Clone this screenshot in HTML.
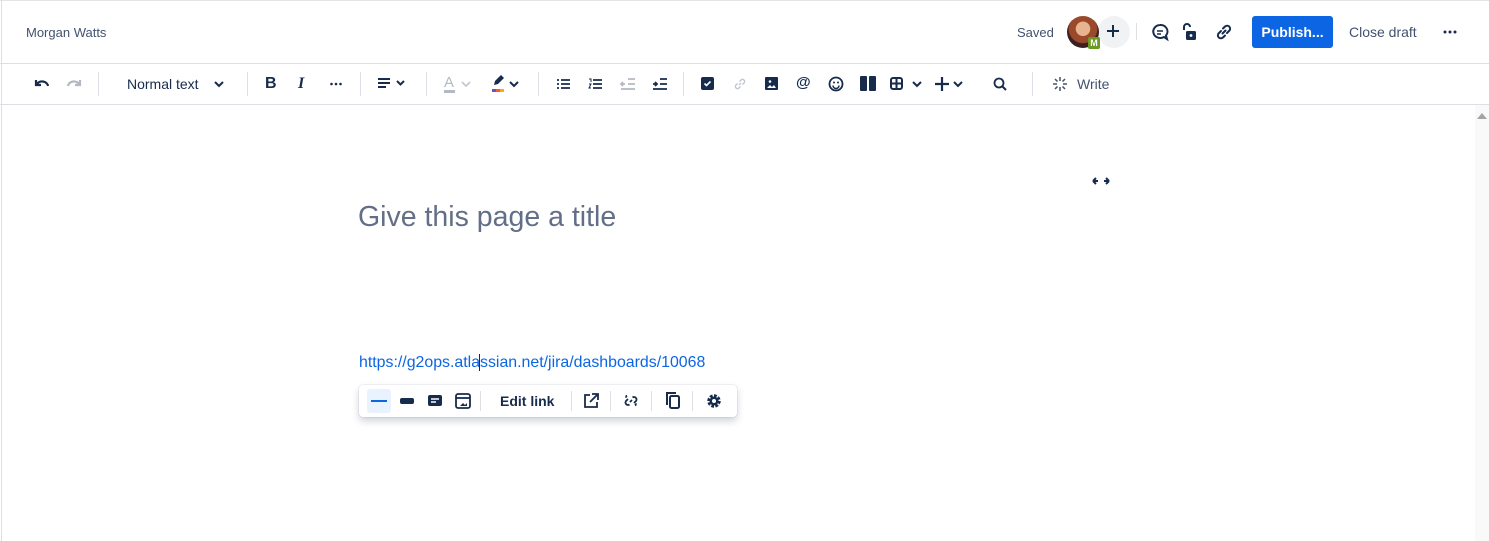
<!DOCTYPE html>
<html><head><meta charset="utf-8"><style>
*{margin:0;padding:0;box-sizing:border-box}
body{width:1489px;height:541px;overflow:hidden;background:#fff;font-family:"Liberation Sans",sans-serif;position:relative;color:#172b4d}
.a{position:absolute}
.sep{position:absolute;width:1px;background:#dcdfe4}
svg{position:absolute;overflow:visible}
.t{font-size:14px;color:#42526e;position:absolute;white-space:nowrap}
</style></head><body>
<div class="a" style="left:0;top:0;width:1489px;height:1px;background:#e2e4e8"></div>
<div class="a" style="left:1px;top:0;width:1px;height:541px;background:#dcdfe4"></div>
<div class="a" style="left:0;top:63px;width:1489px;height:1px;background:#dcdfe4"></div>
<div class="a" style="left:0;top:104px;width:1489px;height:1px;background:#dcdfe4"></div>
<div class="a" style="left:1475px;top:105px;width:14px;height:436px;background:#f9f9f9"></div>
<svg style="left:1477px;top:112px" width="10" height="8"><path d="M0 7L5 1L10 7Z" fill="#a3a3a3"/></svg>

<div class="t" style="left:26px;top:25px;font-size:13px">Morgan Watts</div>
<div class="t" style="left:1017px;top:25px;font-size:13px">Saved</div>
<div class="a" style="left:1098px;top:16px;width:32px;height:32px;border-radius:50%;background:#f1f2f4"></div>
<svg style="left:1106px;top:24px" width="14" height="14"><path d="M7 1V13M1 7H13" stroke="#172b4d" stroke-width="2"/></svg>
<div class="a" style="left:1067px;top:16px;width:32px;height:32px;border-radius:50%;background:radial-gradient(circle at 50% 40%,#e8b48f 0 28%,#9a4a2a 30% 55%,#3a2020 60%)"></div>
<div class="a" style="left:1088px;top:37px;width:12px;height:12px;background:#6a9a23;border-radius:2px;color:#fff;font-size:9px;font-weight:bold;text-align:center;line-height:12px">M</div>
<div class="sep" style="left:1136px;top:23px;height:17px"></div>
<svg style="left:1151px;top:23px" width="18" height="18"><path d="M9 2a7 6.5 0 1 0 4 12l3 2-1-3.5A7 6.5 0 0 0 9 2z" fill="none" stroke="#172b4d" stroke-width="2"/><path d="M6 8h6M6 11h4" stroke="#172b4d" stroke-width="1.6"/></svg>
<svg style="left:1181px;top:22px" width="18" height="20"><path d="M3 8V5a3 3 0 0 1 6 0" fill="none" stroke="#172b4d" stroke-width="2"/><rect x="5" y="9" width="10" height="9" rx="1.5" fill="#172b4d"/><circle cx="10" cy="13.5" r="1.4" fill="#fff"/></svg>
<svg style="left:1214px;top:22px" width="20" height="20"><path d="M8.5 11.5l3-3M7 9l-2.5 2.5a3 3 0 0 0 4.2 4.2L11 13.5M13 11l2.5-2.5a3 3 0 0 0-4.2-4.2L9 6.5" fill="none" stroke="#172b4d" stroke-width="2" stroke-linecap="round"/></svg>
<div class="a" style="left:1252px;top:16px;width:81px;height:32px;background:#0c66e4;border-radius:3px;color:#fff;font-weight:bold;font-size:14px;text-align:center;line-height:32px">Publish...</div>
<div class="t" style="left:1349px;top:24px;font-size:14px">Close draft</div>
<svg style="left:1443px;top:30px" width="14" height="4"><circle cx="2" cy="2" r="1.5" fill="#172b4d"/><circle cx="7" cy="2" r="1.5" fill="#172b4d"/><circle cx="12" cy="2" r="1.5" fill="#172b4d"/></svg>

<!-- toolbar -->
<svg style="left:33px;top:77px" width="18" height="14"><path d="M3 3v5h5M3.5 7.5A6 5 0 0 1 15 9" fill="none" stroke="#172b4d" stroke-width="2.2"/></svg>
<svg style="left:65px;top:77px" width="18" height="14"><path d="M15 3v5h-5M14.5 7.5A6 5 0 0 0 3 9" fill="none" stroke="#b3b9c4" stroke-width="2.2"/></svg>
<div class="sep" style="left:98px;top:72px;height:24px"></div>
<div class="t" style="left:127px;top:76px;color:#172b4d">Normal text</div>
<svg style="left:214px;top:80px" width="10" height="8"><path d="M1 2l4 4 4-4" fill="none" stroke="#172b4d" stroke-width="2"/></svg>
<div class="sep" style="left:247px;top:72px;height:24px"></div>
<div class="t" style="left:265px;top:75px;color:#172b4d;font-weight:bold;font-size:16px">B</div>
<div class="t" style="left:298px;top:75px;color:#172b4d;font-style:italic;font-size:16px;font-family:'Liberation Serif',serif;font-weight:bold">I</div>
<svg style="left:330px;top:82px" width="12" height="4"><circle cx="1.5" cy="2" r="1.3" fill="#172b4d"/><circle cx="6" cy="2" r="1.3" fill="#172b4d"/><circle cx="10.5" cy="2" r="1.3" fill="#172b4d"/></svg>
<div class="sep" style="left:360px;top:72px;height:24px"></div>
<svg style="left:378px;top:78px" width="28" height="12"><path d="M0 1h12M0 5h12M0 9h8" stroke="#172b4d" stroke-width="2"/><path d="M19 3l3.5 3.5L26 3" fill="none" stroke="#172b4d" stroke-width="2"/></svg>
<div class="sep" style="left:426px;top:72px;height:24px"></div>
<div class="t" style="left:444px;top:74px;color:#b3b9c4;font-size:15px">A</div>
<div class="a" style="left:444px;top:90px;width:11px;height:3px;background:#b3b9c4"></div>
<svg style="left:461px;top:80px" width="10" height="8"><path d="M1 2l4 4 4-4" fill="none" stroke="#c1c7d0" stroke-width="1.6"/></svg>
<svg style="left:491px;top:74px" width="14" height="14"><path d="M3 11l1-4 6-6 3 3-6 6z" fill="#172b4d"/></svg>
<div class="a" style="left:492px;top:89px;width:12px;height:3px;background:linear-gradient(90deg,#6554c0 33%,#ff5630 33% 66%,#ffab00 66%)"></div>
<svg style="left:509px;top:80px" width="10" height="8"><path d="M1 2l4 4 4-4" fill="none" stroke="#172b4d" stroke-width="2"/></svg>
<div class="sep" style="left:538px;top:72px;height:24px"></div>
<svg style="left:557px;top:79px" width="13" height="11"><path d="M0 1h2M0 5h2M0 9h2M4 1h9M4 5h9M4 9h9" stroke="#172b4d" stroke-width="1.8"/></svg>
<svg style="left:589px;top:78px" width="13" height="12"><path d="M4 2h9M4 6h9M4 10h9" stroke="#172b4d" stroke-width="1.8"/><path d="M0 1h2v3M0 6h2l-2 4h2" fill="none" stroke="#172b4d" stroke-width="1"/></svg>
<svg style="left:621px;top:78px" width="14" height="12"><path d="M7 1h7M7 6h7M0 11h14M0 6h4M2 4l-2 2 2 2" fill="none" stroke="#b3b9c4" stroke-width="1.8"/></svg>
<svg style="left:653px;top:78px" width="14" height="12"><path d="M7 1h7M7 6h7M0 11h14M0 6h4M2 4l2 2-2 2" fill="none" stroke="#172b4d" stroke-width="1.8"/></svg>
<div class="sep" style="left:683px;top:72px;height:24px"></div>
<div class="a" style="left:701px;top:77px;width:13px;height:13px;background:#172b4d;border-radius:2px"></div>
<svg style="left:701px;top:77px" width="13" height="13"><path d="M3.5 6.5l2 2 4-4" fill="none" stroke="#fff" stroke-width="1.6"/></svg>
<svg style="left:733px;top:77px" width="14" height="14"><path d="M6 8l2-2M4.5 6.5L3 8a2 2 0 0 0 3 3l1.5-1.5M9.5 7.5L11 6a2 2 0 0 0-3-3L6.5 4.5" fill="none" stroke="#c1c7d0" stroke-width="1.4"/></svg>
<div class="a" style="left:765px;top:77px;width:13px;height:13px;background:#172b4d;border-radius:1px"></div>
<svg style="left:765px;top:77px" width="13" height="13"><path d="M2 11l3-3 2 2 2-2 2 3z" fill="#fff"/><circle cx="5" cy="4.5" r="1.3" fill="#fff"/></svg>
<div class="t" style="left:796px;top:74px;color:#172b4d;font-size:15px;font-weight:bold">@</div>
<svg style="left:828px;top:76px" width="16" height="16"><circle cx="8" cy="8" r="6.5" fill="none" stroke="#172b4d" stroke-width="1.8"/><circle cx="6" cy="6.5" r="1" fill="#172b4d"/><circle cx="10" cy="6.5" r="1" fill="#172b4d"/><path d="M5 9.5a3 3 0 0 0 6 0" fill="none" stroke="#172b4d" stroke-width="1.5"/></svg>
<div class="a" style="left:860px;top:76px;width:7px;height:15px;background:#172b4d;border-radius:1px"></div>
<div class="a" style="left:869px;top:76px;width:7px;height:15px;background:#172b4d;border-radius:1px"></div>
<svg style="left:890px;top:77px" width="13" height="13"><rect x="1" y="1" width="11" height="11" rx="2" fill="none" stroke="#172b4d" stroke-width="2"/><path d="M6.5 1v11M1 6.5h11" stroke="#172b4d" stroke-width="2"/></svg>
<svg style="left:912px;top:80px" width="10" height="8"><path d="M1 2l4 4 4-4" fill="none" stroke="#172b4d" stroke-width="2"/></svg>
<svg style="left:935px;top:77px" width="14" height="14"><path d="M7 0V14M0 7H14" stroke="#172b4d" stroke-width="2.2"/></svg>
<svg style="left:953px;top:80px" width="10" height="8"><path d="M1 2l4 4 4-4" fill="none" stroke="#172b4d" stroke-width="2"/></svg>
<svg style="left:993px;top:77px" width="14" height="14"><circle cx="6" cy="6" r="4.5" fill="none" stroke="#172b4d" stroke-width="1.8"/><path d="M9.5 9.5l3.5 3.5" stroke="#172b4d" stroke-width="2"/></svg>
<div class="sep" style="left:1032px;top:72px;height:24px"></div>
<svg style="left:1052px;top:76px" width="16" height="16"><path d="M8 1v4M8 11v4M1 8h4M11 8h4M3 3l2.5 2.5M10.5 10.5L13 13M13 3l-2.5 2.5M5.5 10.5L3 13" stroke="#42526e" stroke-width="1.5"/></svg>
<div class="t" style="left:1077px;top:76px;color:#42526e">Write</div>

<!-- content -->
<svg style="left:1092px;top:177px" width="18" height="8"><path d="M1 4h5M1 4l3-3M1 4l3 3M17 4h-5M17 4l-3-3M17 4l-3 3" fill="none" stroke="#172b4d" stroke-width="2"/></svg>
<div class="a" style="left:358px;top:201px;font-size:28.5px;color:#626f86;white-space:nowrap">Give this page a title</div>
<div class="a" style="left:359px;top:354px;font-size:15.9px;color:#0c66e4;white-space:nowrap">https://g2ops.atla<span style="border-left:1.5px solid #172b4d;margin-left:-1px"></span>ssian.net/jira/dashboards/10068</div>

<div class="a" style="left:359px;top:385px;width:378px;height:32px;background:#fff;border-radius:4px;box-shadow:0 4px 8px rgba(9,30,66,.2),0 0 1px rgba(9,30,66,.3)"></div>
<div class="a" style="left:367px;top:389px;width:24px;height:24px;background:#e9f2ff;border-radius:3px"></div>
<div class="a" style="left:371px;top:400px;width:16px;height:2px;background:#0c66e4"></div>
<div class="a" style="left:400px;top:398px;width:14px;height:6px;background:#172b4d;border-radius:2px"></div>
<svg style="left:427px;top:394px" width="16" height="14"><rect x="1" y="1" width="14" height="11" rx="2" fill="#172b4d"/><path d="M4 5h8M4 8h5" stroke="#fff" stroke-width="1.4"/></svg>
<svg style="left:455px;top:393px" width="16" height="16"><rect x="1" y="1" width="14" height="14" rx="2" fill="none" stroke="#172b4d" stroke-width="1.8"/><path d="M1 5h14" stroke="#172b4d" stroke-width="1.8"/><path d="M5 13l3-3 2 2 2-2v3z" fill="#172b4d"/></svg>
<div class="sep" style="left:480px;top:391px;height:20px"></div>
<div class="a" style="left:500px;top:393px;font-size:14px;font-weight:bold;color:#172b4d;white-space:nowrap">Edit link</div>
<div class="sep" style="left:571px;top:391px;height:20px"></div>
<svg style="left:583px;top:393px" width="16" height="16"><path d="M7 2H2v12h12V9" fill="none" stroke="#172b4d" stroke-width="1.8"/><path d="M9 1h6v6M15 1L7 9" fill="none" stroke="#172b4d" stroke-width="1.8"/></svg>
<div class="sep" style="left:610px;top:391px;height:20px"></div>
<svg style="left:623px;top:393px" width="16" height="16"><path d="M7 9l2-2M5 6L3 8a2.5 2.5 0 0 0 3.5 3.5M11 10l2-2a2.5 2.5 0 0 0-3.5-3.5" fill="none" stroke="#172b4d" stroke-width="1.8"/><path d="M3 2l1 2M2 4h2M13 13l-1-2M14 11h-2" stroke="#172b4d" stroke-width="1.2"/></svg>
<div class="sep" style="left:651px;top:391px;height:20px"></div>
<svg style="left:664px;top:391px" width="18" height="20"><path d="M3 14V2h9" fill="none" stroke="#172b4d" stroke-width="2"/><rect x="6" y="5" width="9" height="12" rx="1.5" fill="none" stroke="#172b4d" stroke-width="2"/></svg>
<div class="sep" style="left:692px;top:391px;height:20px"></div>
<svg style="left:706px;top:393px" width="16" height="16"><circle cx="8" cy="8" r="5" fill="none" stroke="#172b4d" stroke-width="3.5" stroke-dasharray="2.6 1.3"/><circle cx="8" cy="8" r="4.5" fill="#172b4d"/><circle cx="8" cy="8" r="2" fill="#fff"/></svg>
</body></html>
